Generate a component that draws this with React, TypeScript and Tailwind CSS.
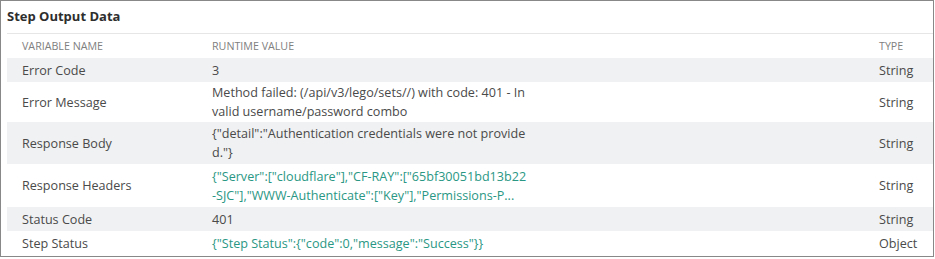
import React from "react";

type Row = {
  name: string;
  value: React.ReactNode;
  type: string;
  h: string;
  gray: boolean;
  link?: boolean;
};

const rows: Row[] = [
  { name: "Error Code", value: "3", type: "String", h: "h-[24px]", gray: true },
  {
    name: "Error Message",
    value: (
      <>
        Method failed: (/api/v3/lego/sets//) with code: 401 - In
        <br />
        valid username/password combo
      </>
    ),
    type: "String",
    h: "h-[40px]",
    gray: false,
  },
  {
    name: "Response Body",
    value: (
      <>
        {'{"detail":"Authentication credentials were not provide'}
        <br />
        {'d."}'}
      </>
    ),
    type: "String",
    h: "h-[42px]",
    gray: true,
  },
  {
    name: "Response Headers",
    value: (
      <>
        {'{"Server":["cloudflare"],"CF-RAY":["65bf30051bd13b22'}
        <br />
        {'-SJC"],"WWW-Authenticate":["Key"],"Permissions-P...'}
      </>
    ),
    type: "String",
    h: "h-[43px]",
    gray: false,
    link: true,
  },
  { name: "Status Code", value: "401", type: "String", h: "h-[24px]", gray: true },
  {
    name: "Step Status",
    value: '{"Step Status":{"code":0,"message":"Success"}}',
    type: "Object",
    h: "h-[25px]",
    gray: false,
    link: true,
  },
];

export default function App() {
  return (
    <div
      className="w-[934px] border border-[#888] bg-white pl-[6px]"
      style={{ fontFamily: '"Open Sans", "Noto Sans", sans-serif' }}
    >
      <div className="h-[32px] flex items-center text-[13px] font-bold text-[#2e2e2e]">
        Step Output Data
      </div>
      <div className="h-px bg-[#e6e6e6]" />
      <div className="grid grid-cols-[190px_667px_1fr] h-[24px] items-center text-[10.7px] uppercase text-[#808080]">
        <div className="pl-[15px]">Variable Name</div>
        <div className="pl-[15px]">Runtime Value</div>
        <div className="pl-[15px]">Type</div>
      </div>
      {rows.map((r) => (
        <div
          key={r.name}
          className={`grid grid-cols-[190px_667px_1fr] items-center text-[12.6px] leading-[19px] text-[#4a4a4a] ${r.h} ${
            r.gray ? "bg-[#f0f1f2]" : "bg-white"
          }`}
        >
          <div className="pl-[15px] whitespace-nowrap">{r.name}</div>
          <div className={`pl-[15px] whitespace-nowrap ${r.link ? "text-[#2a9784]" : ""}`}>
            {r.value}
          </div>
          <div className="pl-[15px] whitespace-nowrap">{r.type}</div>
        </div>
      ))}
    </div>
  );
}
